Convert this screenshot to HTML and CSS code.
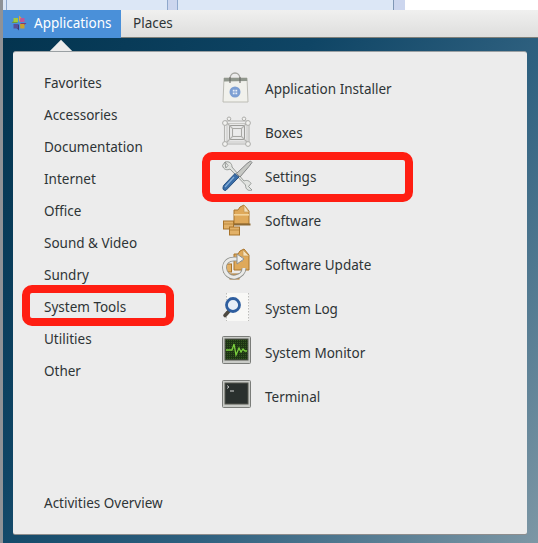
FILE: index.html
```html
<!DOCTYPE html>
<html lang="en">
<head>
<meta charset="utf-8">
<title>Applications menu</title>
<link rel="stylesheet" href="styles.css">
</head>
<body>
<div class="screen">
  <div class="gutter"></div>
  <div class="main">
    <div class="windows">
      <div class="win-a"></div>
      <div class="win-b"></div>
      <div class="win-c"></div>
      <div class="win-d"></div>
      <div class="win-e"></div>
    </div>
    <div class="topbar">
      <div class="app-btn">
        <svg class="logo" viewBox="0 0 16 16" width="16" height="16">
          <path d="M8 0.500 L10.500 3 L8 7.300 Z" fill="#d9a93a"/>
          <path d="M9.300 3 H13.500 V7 H9 Z" fill="#c0559a"/>
          <path d="M15.500 8 L13 10.500 L8.700 8 Z" fill="#7d3a78"/>
          <path d="M13.500 9 V13.500 H9.300 L9 9 Z" fill="#c9a030"/>
          <path d="M8 15.500 L5.500 13 L8 8.700 Z" fill="#3e3a78"/>
          <path d="M7 9 V13.500 H2.500 V9 Z" fill="#5a4f98"/>
          <path d="M0.500 8 L3 5.500 L7.300 8 Z" fill="#6e9a3c"/>
          <path d="M2.500 7 V3 H7 V7 Z" fill="#a3c93f"/>
        </svg>
        <span>Applications</span>
      </div>
      <div class="places">Places</div>
    </div>
    <div class="desktop">
      <div class="arrow"></div>
      <div class="panel">
        <div class="cats">
          <div class="cat">Favorites</div>
          <div class="cat">Accessories</div>
          <div class="cat">Documentation</div>
          <div class="cat">Internet</div>
          <div class="cat">Office</div>
          <div class="cat">Sound &amp; Video</div>
          <div class="cat">Sundry</div>
          <div class="cat">System Tools</div>
          <div class="cat">Utilities</div>
          <div class="cat">Other</div>
          <div class="cat overview">Activities Overview</div>
        </div>
        <div class="apps">
          <div class="app">
            <svg class="icon" viewBox="0 0 32 32">
              <path d="M9 7 C9 -1 19 -1 19 7" fill="none" stroke="#a5a5a0" stroke-width="1.300"/>
              <path d="M3 6 H26 L27 30 H2 Z" fill="#f1f1ec" stroke="#bcbcb5"/>
              <path d="M3 6 H26 L26.200 9 L3 9.500 Z" fill="#8f968c"/>
              <path d="M9 11 V5 M19 11 V5" stroke="#6a6a66" stroke-width="1.100"/>
              <circle cx="14" cy="20" r="5.500" fill="#7d9fd3"/>
              <path d="M11.800 17.800h1.800v1.800h-1.800zM14.400 17.800h1.800v1.800h-1.800zM11.800 20.400h1.800v1.800h-1.800zM14.400 20.400h1.800v1.800h-1.800z" fill="#e8eef8"/>
            </svg>
            <span>Application Installer</span>
          </div>
          <div class="app">
            <svg class="icon" viewBox="0 0 32 32">
              <g fill="none" stroke="#b4b4b1" stroke-width="1.100">
                <path d="M4 5 L28 5 M4 28 L28 28 M3.500 5 V28 M28 5 V28"/>
                <path d="M6 7.500 H26 M6 26 H26 M6 7.500 V26 M26 7.500 V26" stroke="#c8c8c5"/>
                <rect x="8.500" y="9.500" width="15" height="14" stroke="#9d9d9a"/>
                <rect x="11.500" y="12.500" width="9" height="8" stroke="#a8a8a5"/>
                <path d="M4 5 L11.500 12.500 M28 5 L20.500 12.500 M4 28 L11.500 20.500 M28 28 L20.500 20.500"/>
              </g>
              <g fill="#f2f2f0" stroke="#adadaa">
                <circle cx="4" cy="7" r="2.400"/>
                <circle cx="27" cy="7" r="2.400"/>
                <circle cx="4" cy="28" r="2.400"/>
                <circle cx="27" cy="28" r="2.400"/>
                <circle cx="8" cy="2.800" r="1.800"/>
                <circle cx="23" cy="2.800" r="1.800"/>
              </g>
            </svg>
            <span>Boxes</span>
          </div>
          <div class="app">
            <svg class="icon" viewBox="0 0 32 32">
              <path d="M4 2 L1.500 5.500 C2.500 10 6.500 10.500 9 9 L24.500 25 C24.500 29 27 31.500 31 30 L27.500 26.500 L30 23.500 C28 20 25 20 23 21 L11 7 C11 3 8 1 4 2 L7 5.500 L4.800 8 Z" fill="#e2e4e1" stroke="#8f9390" stroke-width=".9"/>
              <path d="M29.500 1 L31 2.500 L28 6.500 L19 17 L15.500 13.500 L26 3.500 Z" fill="#c6c8c4" stroke="#6f7172" stroke-width=".8"/>
              <path d="M16.500 16 L14 13.500 L3 25 C1 28 2 31 5 30.300 L16 19 L18 17 Z" fill="#3a6ea8" stroke="#204a7a" stroke-width=".9"/>
              <path d="M13 17 L4 27" stroke="#86aed8" stroke-width="1.200"/>
            </svg>
            <span>Settings</span>
          </div>
          <div class="app">
            <svg class="icon" viewBox="0 0 32 32">
              <path d="M13 6 H17 L19 3 L23 1 L28 7 V20 H13 Z" fill="#dfa95a" stroke="#a9742a"/>
              <path d="M23 1 L23 8 L28 8 Z" fill="#f5e2bd" stroke="#c69a58" stroke-width=".7"/>
              <rect x="13" y="10" width="15" height="1.600" fill="#f3d49c"/>
              <rect x="12.500" y="19.500" width="17" height="2" fill="#8d6a35"/>
              <rect x="2.500" y="17" width="10" height="8" fill="#e2b168" stroke="#a9742a"/>
              <rect x="8.500" y="23" width="10" height="8" fill="#e2b168" stroke="#a9742a"/>
              <path d="M3 20h9M9 26h9" stroke="#b58135" stroke-width=".8"/>
            </svg>
            <span>Software</span>
          </div>
          <div class="app">
            <svg class="icon" viewBox="0 0 32 32">
              <path d="M13 6 H17 L19 3 L23 1 L28 7 V22 H13 Z" fill="#dfa95a" stroke="#a9742a"/>
              <path d="M22 2 L22 8 L28 8 Z" fill="#f5e2bd" stroke="#c69a58" stroke-width=".7"/>
              <rect x="2.500" y="16" width="8" height="8" fill="#e2b168" stroke="#a9742a"/>
              <rect x="9" y="26" width="9" height="5" fill="#e2b168" stroke="#a9742a"/>
              <path d="M22 11 H13 C7 11 3 15 3.500 20 C4 26 9 30 14.500 29 C20 28 23 24 23 20" fill="none" stroke="#8e908c" stroke-width="4.600"/>
              <path d="M22 11 H13 C7 11 3 15 3.500 20 C4 26 9 30 14.500 29 C20 28 23 24 23 20" fill="none" stroke="#eaeae8" stroke-width="3"/>
              <path d="M16 6 L23 11 L16 16 Z" fill="#f0f0ee" stroke="#8e908c"/>
            </svg>
            <span>Software Update</span>
          </div>
          <div class="app">
            <svg class="icon" viewBox="0 0 32 32">
              <rect x="5" y="1" width="23" height="28" fill="#f8f8f6"/>
              <path d="M5.500 1v28M27.500 1v28" stroke="#bdbdba" stroke-dasharray="1.500 1.500"/>
              <path d="M4 23.500 L8 19" stroke="#4e4a42" stroke-width="3.600" stroke-linecap="round"/>
              <circle cx="12" cy="13" r="6.500" fill="#e7eef7" stroke="#2e5e9f" stroke-width="2.800"/>
            </svg>
            <span>System Log</span>
          </div>
          <div class="app">
            <svg class="icon" viewBox="0 0 32 32">
              <defs>
                <pattern id="dots" width="2" height="2" patternUnits="userSpaceOnUse">
                  <rect width="2" height="2" fill="#1d3414"/>
                  <rect width="1" height="1" fill="#33551f"/>
                </pattern>
              </defs>
              <rect x="1.500" y="0.500" width="28" height="27" rx="1" fill="#c9cbc7" stroke="#7a7c79"/>
              <rect x="4" y="3" width="23" height="21" fill="url(#dots)" stroke="#54574f"/>
              <path d="M5 14 H11 L13 8 L15 19 L18 12 L20 16 L22 13 L24 15 H26" fill="none" stroke="#7bcf3e" stroke-width="1.300"/>
            </svg>
            <span>System Monitor</span>
          </div>
          <div class="app">
            <svg class="icon" viewBox="0 0 32 32">
              <rect x="1.500" y="0.500" width="28" height="27" rx="1" fill="#c9cbc7" stroke="#7a7c79"/>
              <rect x="4" y="3" width="23" height="21" fill="#2a302e" stroke="#54574f"/>
              <path d="M6 5.500 L8 7 L6 8.500" fill="none" stroke="#e4e4e4" stroke-width=".8"/>
              <path d="M9 11 H13" stroke="#d8d8d8" stroke-width="1"/>
            </svg>
            <span>Terminal</span>
          </div>
        </div>
      </div>
      <div class="mark mark-tools"></div>
      <div class="mark mark-settings"></div>
    </div>
  </div>
</div>
</body>
</html>
```
FILE: styles.css
```css
* { box-sizing: border-box; }
html, body { margin: 0; height: 100%; }
body { font-family: "Noto Sans", "Open Sans", sans-serif; font-size: 13.5px; color: #2e3436; overflow: hidden; }
.screen { display: flex; width: 538px; height: 543px; background: #fff; }
.gutter { width: 3px; background: #8f9296; }
.main { width: 535px; display: flex; flex-direction: column; }
.windows { height: 10px; display: flex; flex: none; }
.win-a { width: 4px; background: #dbe6f5; border-right: 1px solid #8fa8cc; }
.win-b { width: 160px; background: #dce7f6; }
.win-c { width: 11px; background: #ccd6ee; border-left: 1px solid #8fa8cc; border-right: 1px solid #8fa8cc; }
.win-d { width: 216px; background: #dce7f6; border-right: 1px solid #7f97b5; }
.win-e { width: 11px; background: #ccd6ee; }
.topbar { height: 28px; flex: none; display: flex; background: linear-gradient(#f0f0ef, #dededd); border-bottom: 1px solid #7f8079; }
.app-btn { width: 118px; display: flex; align-items: center; padding: 0 0 3px 8px; gap: 7px; background: #4a90d9; color: #fff; margin-bottom: -1px; }
.logo { flex: none; }
.places { padding: 0 0 1px 12px; display: flex; align-items: center; color: #2e3436; }
.desktop { position: relative; flex: 1; display: flex; padding: 13px 11px 9px 10px; background: linear-gradient(125deg, #03344f 0%, #0f4565 35%, #2f6180 62%, #7d97a5 100%); }
.arrow { position: absolute; left: 48px; top: 6px; width: 20px; height: 20px; background: #ececec; transform: rotate(45deg); }
.panel { position: relative; flex: 1; display: flex; background: #ececec; border-top: 1px solid #9aa0a3; border-radius: 3px 3px 2px 2px; box-shadow: 0 1px 0 #8d8d8d; }
.cats { width: 208px; display: flex; flex-direction: column; padding: 15px 0 15px 31px; }
.cat { height: 32px; flex: none; display: flex; align-items: center; }
.overview { margin-top: auto; }
.apps { display: flex; flex-direction: column; padding-top: 14px; }
.app { height: 44px; flex: none; display: flex; align-items: center; gap: 12px; }
.app span { padding-top: 2px; }
.icon { width: 32px; height: 32px; flex: none; }
.mark { position: absolute; border: 8px solid #ff1e12; border-radius: 10px; }
.mark-tools { left: 19px; top: 247px; width: 152px; height: 41px; }
.mark-settings { left: 199px; top: 114px; width: 211px; height: 50px; }
```
